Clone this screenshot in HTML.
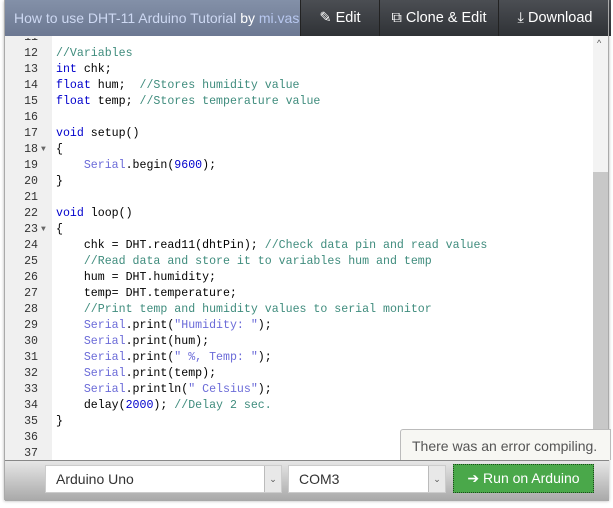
<!DOCTYPE html><html><head><style>
body{margin:0;width:613px;height:508px;background:#fff;position:relative;overflow:hidden;font-family:"Liberation Sans",sans-serif}
.frame{position:absolute;left:4px;top:0;width:605px;height:500px;border:1px solid #aaa;border-top:none;box-sizing:border-box;box-shadow:0 1px 3px rgba(0,0,0,.3)}
.hdr{position:absolute;left:4px;top:0;width:606px;height:36px;background:linear-gradient(#8390a8,#6c7892);}
.title{position:absolute;left:10px;top:10px;font-size:14px;color:#cdd8f2;white-space:nowrap;width:290px;overflow:hidden}
.title a{color:#b8c8f0}
.btns{position:absolute;left:300px;top:0;height:36px;display:flex;background:#3a3d42}
.btn{height:36px;line-height:37px;color:#fff;font-size:14.5px;text-align:center;background:linear-gradient(#4b4e53,#2f3236);border-left:1px solid #222}
.gut{position:absolute;left:5px;top:36px;width:47px;height:424px;background:#f0f0f0}
.code{position:absolute;left:0;top:38px;height:422px;width:593px;overflow:hidden;font-family:"Liberation Mono",monospace;font-size:11.6px}
.l{position:absolute;left:0;height:16px;line-height:16px;white-space:pre}
.n{position:absolute;left:5px;width:33px;text-align:right;color:#333}
.t{position:absolute;left:56px;color:#000}
.k{color:#0000cc}.c{color:#3f8c7d}.s{color:#6b6bd8}.m{color:#0000cc}
.fold{position:absolute;left:41px;color:#666;font-size:8px}
.sb{position:absolute;left:593px;top:36px;width:16px;height:424px;background:#f3f3f3}
.thumb{position:absolute;left:593px;top:172px;width:16px;height:288px;background:#c8c8c8}
.bar{position:absolute;left:5px;top:460px;width:604px;height:40px;background:linear-gradient(#e6e6e6,#a8a8a8);border-top:1px solid #888}
.sel{position:absolute;top:465px;height:28px;background:#fff;border:1px solid #ccc;box-sizing:border-box;font-size:14px;line-height:26px;padding-left:10px;color:#333}
.arr{position:absolute;right:0;top:0;width:16px;height:26px;background:#e8e8e8;border-left:1px solid #bbb;text-align:center;font-size:9px;color:#555}
.run{position:absolute;left:453px;top:464px;width:141px;height:29px;background:#4aa84a;border:1px dotted #1a4a1a;box-sizing:border-box;color:#fff;font-size:14px;line-height:27px;text-align:center}
.tip{position:absolute;left:400px;top:429px;width:211px;height:31px;background:#f7f7f3;border:1px solid #bbb;border-bottom:none;border-radius:3px 0 0 0;box-sizing:border-box;font-size:14px;color:#555;line-height:32px;padding-left:11px}
</style></head><body>
<div class="gut"></div>
<div class="code">
<div class="l" style="top:-8px"><span class="n">11</span></div>
<div class="l" style="top:8px"><span class="n">12</span><span class="t"><span class="c">//Variables</span></span></div>
<div class="l" style="top:24px"><span class="n">13</span><span class="t"><span class="k">int</span> chk;</span></div>
<div class="l" style="top:40px"><span class="n">14</span><span class="t"><span class="k">float</span> hum;  <span class="c">//Stores humidity value</span></span></div>
<div class="l" style="top:56px"><span class="n">15</span><span class="t"><span class="k">float</span> temp; <span class="c">//Stores temperature value</span></span></div>
<div class="l" style="top:72px"><span class="n">16</span></div>
<div class="l" style="top:88px"><span class="n">17</span><span class="t"><span class="k">void</span> setup()</span></div>
<div class="l" style="top:104px"><span class="n">18</span><span class="fold">▼</span><span class="t">{</span></div>
<div class="l" style="top:120px"><span class="n">19</span><span class="t">    <span class="s">Serial</span>.begin(<span class="m">9600</span>);</span></div>
<div class="l" style="top:136px"><span class="n">20</span><span class="t">}</span></div>
<div class="l" style="top:152px"><span class="n">21</span></div>
<div class="l" style="top:168px"><span class="n">22</span><span class="t"><span class="k">void</span> loop()</span></div>
<div class="l" style="top:184px"><span class="n">23</span><span class="fold">▼</span><span class="t">{</span></div>
<div class="l" style="top:200px"><span class="n">24</span><span class="t">    chk = DHT.read11(dhtPin); <span class="c">//Check data pin and read values</span></span></div>
<div class="l" style="top:216px"><span class="n">25</span><span class="t">    <span class="c">//Read data and store it to variables hum and temp</span></span></div>
<div class="l" style="top:232px"><span class="n">26</span><span class="t">    hum = DHT.humidity;</span></div>
<div class="l" style="top:248px"><span class="n">27</span><span class="t">    temp= DHT.temperature;</span></div>
<div class="l" style="top:264px"><span class="n">28</span><span class="t">    <span class="c">//Print temp and humidity values to serial monitor</span></span></div>
<div class="l" style="top:280px"><span class="n">29</span><span class="t">    <span class="s">Serial</span>.print(<span class="s">"Humidity: "</span>);</span></div>
<div class="l" style="top:296px"><span class="n">30</span><span class="t">    <span class="s">Serial</span>.print(hum);</span></div>
<div class="l" style="top:312px"><span class="n">31</span><span class="t">    <span class="s">Serial</span>.print(<span class="s">" %, Temp: "</span>);</span></div>
<div class="l" style="top:328px"><span class="n">32</span><span class="t">    <span class="s">Serial</span>.print(temp);</span></div>
<div class="l" style="top:344px"><span class="n">33</span><span class="t">    <span class="s">Serial</span>.println(<span class="s">" Celsius"</span>);</span></div>
<div class="l" style="top:360px"><span class="n">34</span><span class="t">    delay(<span class="m">2000</span>); <span class="c">//Delay 2 sec.</span></span></div>
<div class="l" style="top:376px"><span class="n">35</span><span class="t">}</span></div>
<div class="l" style="top:392px"><span class="n">36</span></div>
<div class="l" style="top:408px"><span class="n">37</span></div>
</div>
<div class="sb"></div><div class="thumb"></div>
<div style="position:absolute;left:597px;top:38px;font-size:9px;color:#555">^</div>
<div class="hdr"><div class="title">How to use DHT-11 Arduino Tutorial <span style="color:#fff">by</span> <a>mi.vas</a></div></div>
<div class="btns">
<div class="btn" style="width:78px">✎ Edit</div>
<div class="btn" style="width:118px">⧉ Clone &amp; Edit</div>
<div class="btn" style="width:112px">⤓ Download</div>
</div>
<div class="frame"></div>
<div class="bar"></div>
<div class="sel" style="left:45px;width:237px">Arduino Uno<div class="arr">⌄</div></div>
<div class="sel" style="left:288px;width:158px">COM3<div class="arr">⌄</div></div>
<div class="run">➔ Run on Arduino</div>
<div class="tip">There was an error compiling.</div>
</body></html>
